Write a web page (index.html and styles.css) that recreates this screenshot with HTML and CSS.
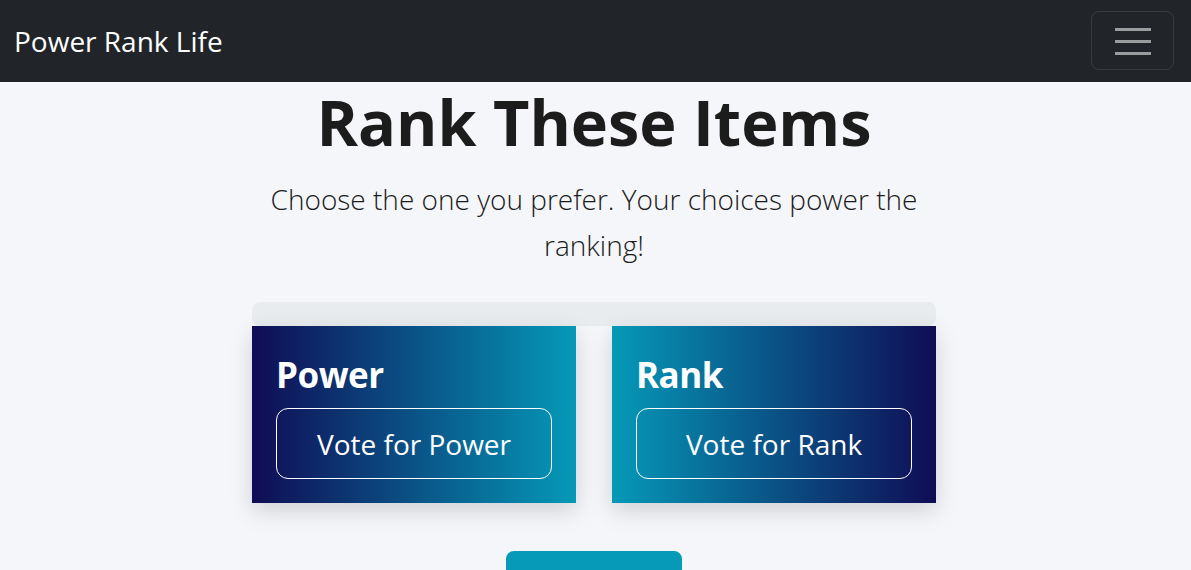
FILE: index.html
```html
<!DOCTYPE html>
<html lang="en">
<head>
<meta charset="utf-8">
<title>Power Rank Life</title>
<link rel="stylesheet" href="styles.css">
</head>
<body>
<nav class="navbar">
  <a class="brand" href="#">Power Rank Life</a>
  <button class="toggler" aria-label="Toggle navigation">
    <svg width="36" height="30" viewBox="0 0 36 30" aria-hidden="true">
      <path d="M0 3.5H36M0 15.5H36M0 27.5H36" stroke="rgba(255,255,255,0.55)" stroke-width="3"/>
    </svg>
  </button>
</nav>
<main class="main">
  <h1 class="title">Rank These Items</h1>
  <p class="lead">Choose the one you prefer. Your choices power the ranking!</p>
  <section class="arena">
    <div class="progress"></div>
    <div class="cards">
      <div class="card card-left">
        <h2 class="card-title">Power</h2>
        <button class="vote">Vote for Power</button>
      </div>
      <div class="card card-right">
        <h2 class="card-title">Rank</h2>
        <button class="vote">Vote for Rank</button>
      </div>
    </div>
  </section>
  <button class="skip">Skip</button>
</main>
</body>
</html>
```
FILE: styles.css
```css
* { box-sizing: border-box; }
html, body { margin: 0; padding: 0; }
body {
  background: #f5f6fa;
  font-family: "Open Sans", "Noto Sans", sans-serif;
  color: #1c1c1c;
  overflow: hidden;
}
.navbar {
  height: 82px;
  background: #212529;
  display: flex;
  align-items: center;
  justify-content: space-between;
  padding: 0 17px 0 14px;
}
.brand {
  color: #fff;
  text-decoration: none;
  font-size: 28px;
}
.toggler {
  width: 83px;
  height: 59px;
  background: transparent;
  border: 1px solid rgba(255,255,255,0.1);
  border-radius: 8px;
  display: flex;
  align-items: center;
  justify-content: center;
  padding: 0;
  margin-top: -1px;
}
.main {
  display: flex;
  flex-direction: column;
  align-items: center;
  padding-right: 3px;
}
.title {
  margin: 3px 0 0;
  font-size: 63px;
  font-weight: 700;
  line-height: 74px;
}
.lead {
  margin: 17px 0 0;
  width: 680px;
  text-align: center;
  font-size: 28px;
  font-weight: 300;
  line-height: 46px;
}
.arena {
  width: 684px;
  margin-top: 34px;
}
.progress {
  height: 24px;
  background: #e9ecef;
  border-radius: 8px;
}
.cards {
  display: flex;
  gap: 36px;
}
.card {
  flex: 1;
  padding: 24px;
  color: #fff;
  box-shadow: 0 8px 22px rgba(0,0,0,0.15);
}
.card-left { background: linear-gradient(to right, #100c55, #0599b8); }
.card-right { background: linear-gradient(to right, #0599b8, #100c55); }
.card-title {
  margin: 3px 0 12px;
  font-size: 35px;
  line-height: 43px;
  font-weight: 700;
  letter-spacing: -0.5px;
}
.vote {
  width: 100%;
  height: 71px;
  background: transparent;
  border: 1px solid #fff;
  border-radius: 12px;
  color: #fff;
  font-family: inherit;
  font-size: 28px;
}
.skip {
  margin-top: 48px;
  width: 176px;
  height: 90px;
  padding-top: 40px;
  background: #069ab8;
  border: none;
  border-radius: 8px;
  color: #fff;
  font-family: inherit;
  font-size: 28px;
}
```
